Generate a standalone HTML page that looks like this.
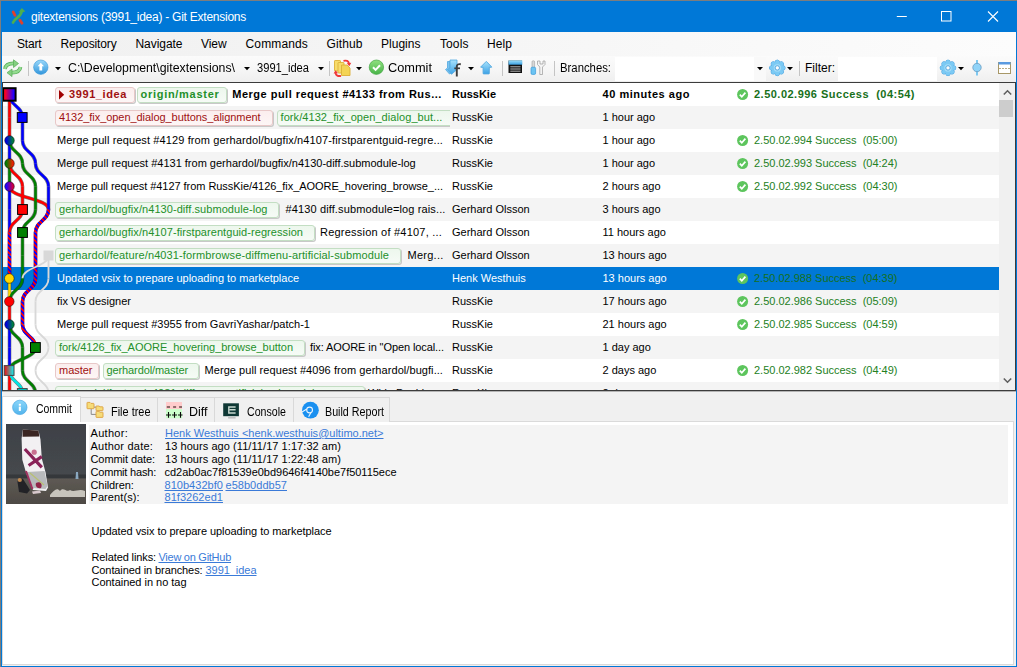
<!DOCTYPE html>
<html><head><meta charset="utf-8"><style>
html,body{margin:0;padding:0;width:1017px;height:667px;overflow:hidden;position:relative;font-family:"Liberation Sans", sans-serif;}
</style></head><body>
<div style="position:absolute;left:0px;top:0px;width:1017px;height:667px;background:#7d7d7d"></div>
<div style="position:absolute;left:1px;top:1px;width:1016px;height:666px;background:#0078d7"></div>
<div style="position:absolute;left:2px;top:32px;width:1014px;height:634px;background:#f0f0f0"></div>
<svg style="position:absolute;left:0;top:0" width="40" height="32">
<path d="M13 22.5 C15 17.5 21 17.5 21.8 11" stroke="#4caf50" stroke-width="2.7" fill="none" stroke-linecap="round"/>
<path d="M19.6 11.8 L21.8 8.6 L24.6 11.2 Z" fill="#4caf50" stroke="#4caf50" stroke-width="1"/>
<path d="M13.2 11.9 L15 15.3" stroke="#e0402a" stroke-width="2.8" stroke-linecap="round"/>
<path d="M20 20.2 L22 23.2" stroke="#e0402a" stroke-width="2.8" stroke-linecap="round"/>
</svg>
<svg style="position:absolute;left:880;top:0;left:880px" width="137" height="32">
<path d="M16.8 16.5 H26.8" stroke="#fff" stroke-width="1"/>
<rect x="61.5" y="11.5" width="9.5" height="9.5" stroke="#fff" stroke-width="1" fill="none"/>
<path d="M108 11.5 L118 21.5 M118 11.5 L108 21.5" stroke="#fff" stroke-width="1.1"/>
</svg>
<div style="position:absolute;left:2px;top:32px;width:1014px;height:24px;background:linear-gradient(to right,#f0f0f0,#f6f6f6 50%,#fcfcfc)"></div>
<div style="position:absolute;left:2px;top:56px;width:1014px;height:26px;background:linear-gradient(#fbfbfb,#f6f6f6 50%,#efefef)"></div>
<div style="position:absolute;left:615px;top:57px;width:140px;height:24px;background:#fff"></div>
<div style="position:absolute;left:754px;top:57px;width:12px;height:24px;background:#f9f9f9"></div>
<div style="position:absolute;left:838px;top:57px;width:99px;height:24px;background:#fff"></div>
<div style="position:absolute;left:28px;top:61px;width:1px;height:15px;background:#c4c4c4"></div>
<div style="position:absolute;left:329px;top:61px;width:1px;height:15px;background:#c4c4c4"></div>
<div style="position:absolute;left:502px;top:61px;width:1px;height:15px;background:#c4c4c4"></div>
<div style="position:absolute;left:554px;top:61px;width:1px;height:15px;background:#c4c4c4"></div>
<div style="position:absolute;left:799px;top:61px;width:1px;height:15px;background:#c4c4c4"></div>
<svg style="position:absolute;left:54.5px;top:66.7px" width="6" height="4"><path d="M0 0H6L3 3.2Z" fill="#000"/></svg>
<svg style="position:absolute;left:243.5px;top:66.7px" width="6" height="4"><path d="M0 0H6L3 3.2Z" fill="#000"/></svg>
<svg style="position:absolute;left:317.5px;top:66.7px" width="6" height="4"><path d="M0 0H6L3 3.2Z" fill="#000"/></svg>
<svg style="position:absolute;left:356px;top:66.7px" width="6" height="4"><path d="M0 0H6L3 3.2Z" fill="#000"/></svg>
<svg style="position:absolute;left:467.5px;top:66.7px" width="6" height="4"><path d="M0 0H6L3 3.2Z" fill="#000"/></svg>
<svg style="position:absolute;left:756.5px;top:66.7px" width="6" height="4"><path d="M0 0H6L3 3.2Z" fill="#000"/></svg>
<svg style="position:absolute;left:787px;top:66.7px" width="6" height="4"><path d="M0 0H6L3 3.2Z" fill="#000"/></svg>
<svg style="position:absolute;left:957.5px;top:66.7px" width="6" height="4"><path d="M0 0H6L3 3.2Z" fill="#000"/></svg>
<svg style="position:absolute;left:0;top:56px" width="1017" height="26">
<defs>
<linearGradient id="gblue" x1="0" y1="0" x2="0" y2="1"><stop offset="0" stop-color="#9ad8fa"/><stop offset="1" stop-color="#3196dc"/></linearGradient>
<linearGradient id="ggreen" x1="0" y1="0" x2="0" y2="1"><stop offset="0" stop-color="#90e080"/><stop offset="1" stop-color="#48b448"/></linearGradient>
<linearGradient id="garr" x1="0" y1="0" x2="0" y2="1"><stop offset="0" stop-color="#a8e2fb"/><stop offset="1" stop-color="#3ca2e6"/></linearGradient>
<radialGradient id="ggear" cx="0.5" cy="0.4" r="0.6"><stop offset="0" stop-color="#b5e4fb"/><stop offset="1" stop-color="#4aaee8"/></radialGradient>
</defs>
<!-- refresh -->
<path d="M5 13 C5.5 9 9.5 7.2 14.5 7.4" stroke="#58ac58" stroke-width="3.6" fill="none"/>
<path d="M5 13 C5.5 9 9.5 7.2 14.5 7.4" stroke="#94dc90" stroke-width="2.2" fill="none"/>
<path d="M13.5 3.8 L18.5 7.5 L13.5 11.5 Z" fill="#84d080" stroke="#58ac58" stroke-width="0.7"/>
<path d="M20.5 11 C20 15 16 16.8 11 16.6" stroke="#58ac58" stroke-width="3.6" fill="none"/>
<path d="M20.5 11 C20 15 16 16.8 11 16.6" stroke="#94dc90" stroke-width="2.2" fill="none"/>
<path d="M12 13 L7 16.7 L12 20.6 Z" fill="#84d080" stroke="#58ac58" stroke-width="0.7"/>
<!-- blue up circle -->
<circle cx="40.8" cy="11.2" r="7.2" fill="url(#gblue)" stroke="#3a98d8" stroke-width="0.6"/>
<path d="M40.8 6.8 L44 10.2 H42.2 V14.5 H39.4 V10.2 H37.6 Z" fill="#fff"/>
<!-- branch docs -->
<rect x="334.5" y="4.5" width="6" height="10.5" rx="0.6" fill="#f7dc6a" stroke="#dcb038" stroke-width="0.9"/>
<rect x="338" y="6.5" width="6" height="10.5" rx="0.6" fill="#f7dc6a" stroke="#dcb038" stroke-width="0.9"/>
<path d="M341.5 9 H347 L350 12 V19.5 H341.5 Z" fill="#f4d455" stroke="#dcb038" stroke-width="0.9"/>
<path d="M343.5 4.8 C346.5 4 348.5 5 349 7.5" stroke="#f03838" stroke-width="1.8" fill="none"/>
<path d="M346.8 7.2 L349.3 10.2 L351.3 6.8 Z" fill="#f03838"/>
<path d="M341 19.8 C338 20.5 336 19.5 335.5 17" stroke="#f03838" stroke-width="1.8" fill="none"/>
<path d="M333.6 17.4 L335.6 14.2 L338 17.2 Z" fill="#f03838"/>
<!-- commit check -->
<circle cx="376.4" cy="11.2" r="7.2" fill="url(#ggreen)" stroke="#48a848" stroke-width="0.7"/>
<path d="M373 11.3 L375.6 13.9 L380 9.2" stroke="#fff" stroke-width="2" fill="none"/>
<!-- pull -->
<path d="M447.5 5.5 H450 V12 L453 15.5 L449.5 18 L445.5 13.5 L447.5 12 Z" fill="#7cc4f0" stroke="#52a8e0" stroke-width="0.8"/>
<path d="M450 4 H457 V13.5 L451.5 18.3 L447.5 13.5 L450 12 Z" fill="url(#garr)" stroke="#52a8e0" stroke-width="0.8"/>
<path d="M456.8 20.5 V10.5 C456.8 8.5 458 7.8 460.8 8.2" stroke="#3c3c3c" stroke-width="1.9" fill="none"/>
<path d="M454.3 12.3 H460" stroke="#3c3c3c" stroke-width="1.7"/>
<!-- push -->
<path d="M486.3 5.4 L491.6 10.8 Q492 11.3 491.4 11.3 H489.3 V17.4 Q489.3 17.9 488.8 17.9 H483.6 Q483.1 17.9 483.1 17.4 V11.3 H481 Q480.4 11.3 480.9 10.8 Z" fill="url(#garr)" stroke="#52a8e0" stroke-width="0.9"/>
<!-- console -->
<rect x="508.5" y="4.5" width="13.5" height="12.5" fill="#111"/>
<defs><linearGradient id="gcon" x1="0" y1="0" x2="0" y2="1"><stop offset="0" stop-color="#9ee0fa"/><stop offset="1" stop-color="#3a9ee0"/></linearGradient></defs><rect x="508.5" y="4.3" width="13.8" height="4.4" fill="url(#gcon)"/>
<path d="M510.3 10.8 H520.5 M510.3 13 H520.5 M510.3 15.2 H520.5" stroke="#c8c8c8" stroke-width="0.9"/>
<!-- settings -->
<rect x="532" y="4.8" width="2.6" height="7.5" rx="1" fill="#d8d8d8" stroke="#a0a0a0" stroke-width="0.6"/>
<rect x="531" y="11.2" width="4.6" height="7.2" rx="1.2" fill="#6cc4f2" stroke="#3a9ada" stroke-width="0.7"/>
<path d="M537.5 5 V8.5 L539.8 11 V18.5 H542.5 V11 L545 8.5 V5 H543 V8 H540 V5 Z" fill="#f4f4f4" stroke="#999" stroke-width="0.7"/>
<!-- gears -->
<g transform="translate(777.3,11.9)"><g fill="#4aa2e0" stroke="#4aa2e0" stroke-width="1"><circle cx="5.60" cy="0.00" r="2.2"/><circle cx="3.96" cy="3.96" r="2.2"/><circle cx="0.00" cy="5.60" r="2.2"/><circle cx="-3.96" cy="3.96" r="2.2"/><circle cx="-5.60" cy="0.00" r="2.2"/><circle cx="-3.96" cy="-3.96" r="2.2"/><circle cx="-0.00" cy="-5.60" r="2.2"/><circle cx="3.96" cy="-3.96" r="2.2"/><circle r="5.6"/></g><g fill="#7ccaf4"><circle cx="5.60" cy="0.00" r="2.2"/><circle cx="3.96" cy="3.96" r="2.2"/><circle cx="0.00" cy="5.60" r="2.2"/><circle cx="-3.96" cy="3.96" r="2.2"/><circle cx="-5.60" cy="0.00" r="2.2"/><circle cx="-3.96" cy="-3.96" r="2.2"/><circle cx="-0.00" cy="-5.60" r="2.2"/><circle cx="3.96" cy="-3.96" r="2.2"/><circle r="5.6"/></g><circle r="3.6" fill="#a8def8"/><circle r="2.2" fill="#fbfbfb" stroke="#48a0dc" stroke-width="0.9"/></g>
<g transform="translate(948,11.9)"><g fill="#4aa2e0" stroke="#4aa2e0" stroke-width="1"><circle cx="5.60" cy="0.00" r="2.2"/><circle cx="3.96" cy="3.96" r="2.2"/><circle cx="0.00" cy="5.60" r="2.2"/><circle cx="-3.96" cy="3.96" r="2.2"/><circle cx="-5.60" cy="0.00" r="2.2"/><circle cx="-3.96" cy="-3.96" r="2.2"/><circle cx="-0.00" cy="-5.60" r="2.2"/><circle cx="3.96" cy="-3.96" r="2.2"/><circle r="5.6"/></g><g fill="#7ccaf4"><circle cx="5.60" cy="0.00" r="2.2"/><circle cx="3.96" cy="3.96" r="2.2"/><circle cx="0.00" cy="5.60" r="2.2"/><circle cx="-3.96" cy="3.96" r="2.2"/><circle cx="-5.60" cy="0.00" r="2.2"/><circle cx="-3.96" cy="-3.96" r="2.2"/><circle cx="-0.00" cy="-5.60" r="2.2"/><circle cx="3.96" cy="-3.96" r="2.2"/><circle r="5.6"/></g><circle r="3.6" fill="#a8def8"/><circle r="2.2" fill="#fbfbfb" stroke="#48a0dc" stroke-width="0.9"/></g>
<!-- commit node -->
<path d="M977 4 V19.5" stroke="#7ec8f0" stroke-width="2"/>
<circle cx="977" cy="11.5" r="4.2" fill="#8fd3f8" stroke="#6a9cc0" stroke-width="0.8"/>
<!-- window icon -->
<rect x="998.5" y="6.5" width="12" height="11" fill="#fff" stroke="#a89868" stroke-width="1"/>
<rect x="998.5" y="6" width="12" height="2.5" fill="#5a9ae0"/>
<path d="M999 12.5 H1010" stroke="#a89868" stroke-width="0.8" stroke-dasharray="2 1"/>
</svg>
<div style="position:absolute;left:2px;top:82px;width:1014px;height:309px;background:#3c3c3c"></div>
<div style="position:absolute;left:3px;top:83px;width:1012px;height:307px;background:#fff"></div>
<div style="position:absolute;left:3px;top:106px;width:996px;height:23px;background:#f4f4f4"></div>
<div style="position:absolute;left:3px;top:152px;width:996px;height:23px;background:#f4f4f4"></div>
<div style="position:absolute;left:3px;top:198px;width:996px;height:23px;background:#f4f4f4"></div>
<div style="position:absolute;left:3px;top:244px;width:996px;height:23px;background:#f4f4f4"></div>
<div style="position:absolute;left:3px;top:267px;width:996px;height:23px;background:#0078d7"></div>
<div style="position:absolute;left:3px;top:290px;width:996px;height:23px;background:#f4f4f4"></div>
<div style="position:absolute;left:3px;top:336px;width:996px;height:23px;background:#f4f4f4"></div>
<div style="position:absolute;left:3px;top:382px;width:996px;height:8px;background:#f4f4f4"></div>
<div style="position:absolute;left:999px;top:83px;width:16px;height:307px;background:#f0f0f0"></div>
<div style="position:absolute;left:999px;top:100px;width:14px;height:17px;background:#cdcdcd"></div>
<svg style="position:absolute;left:998.5px;top:83px" width="17" height="307">
<path d="M4.8 11.5 L8.5 7.8 L12.2 11.5" stroke="#606060" stroke-width="1.6" fill="none"/>
<path d="M4.8 295.5 L8.5 299.2 L12.2 295.5" stroke="#606060" stroke-width="1.6" fill="none"/>
</svg>
<div style="position:absolute;left:0;top:0;width:1017px;height:667px;clip-path:inset(83px 19px 277px 3px)">
<div style="position:absolute;left:55px;top:87.0px;width:80px;height:16px;background:linear-gradient(#fbeeee,#fdf6f6);border:1px solid #e8c8c8;border-radius:3px;box-shadow:1px 1px 0 #c8c8c8;box-sizing:border-box"></div>
<svg style="position:absolute;left:59px;top:90.0px" width="6" height="10"><path d="M0 0 L5.2 4.75 L0 9.5Z" fill="#a00000"/></svg>
<div style="position:absolute;left:136.5px;top:87.0px;width:90px;height:16px;background:linear-gradient(#edf7ed,#f6fbf6);border:1px solid #c3dec3;border-radius:3px;box-shadow:1px 1px 0 #c8c8c8;box-sizing:border-box"></div>
<svg style="position:absolute;left:736px;top:88.1px" width="13" height="13"><circle cx="6.6" cy="6.5" r="5.5" fill="#5dc55d"/><path d="M3.8 6.6 L5.8 8.8 L9.4 4.6" stroke="#fff" stroke-width="1.7" fill="none"/></svg>
<div style="position:absolute;left:55px;top:110.0px;width:218px;height:16px;background:linear-gradient(#fbeeee,#fdf6f6);border:1px solid #e8c8c8;border-radius:3px;box-shadow:1px 1px 0 #c8c8c8;box-sizing:border-box"></div>
<div style="position:absolute;left:276.5px;top:110.0px;width:173.5px;height:18px;overflow:hidden"><div style="position:absolute;left:0;top:0;width:200px;height:16px;background:linear-gradient(#edf7ed,#f6fbf6);border:1px solid #c3dec3;border-radius:3px;box-shadow:1px 1px 0 #c8c8c8;box-sizing:border-box"></div></div>
<svg style="position:absolute;left:736px;top:134.1px" width="13" height="13"><circle cx="6.6" cy="6.5" r="5.5" fill="#5dc55d"/><path d="M3.8 6.6 L5.8 8.8 L9.4 4.6" stroke="#fff" stroke-width="1.7" fill="none"/></svg>
<svg style="position:absolute;left:736px;top:157.1px" width="13" height="13"><circle cx="6.6" cy="6.5" r="5.5" fill="#5dc55d"/><path d="M3.8 6.6 L5.8 8.8 L9.4 4.6" stroke="#fff" stroke-width="1.7" fill="none"/></svg>
<svg style="position:absolute;left:736px;top:180.1px" width="13" height="13"><circle cx="6.6" cy="6.5" r="5.5" fill="#5dc55d"/><path d="M3.8 6.6 L5.8 8.8 L9.4 4.6" stroke="#fff" stroke-width="1.7" fill="none"/></svg>
<div style="position:absolute;left:55px;top:202.0px;width:224px;height:16px;background:linear-gradient(#edf7ed,#f6fbf6);border:1px solid #c3dec3;border-radius:3px;box-shadow:1px 1px 0 #c8c8c8;box-sizing:border-box"></div>
<div style="position:absolute;left:55px;top:225.0px;width:260px;height:16px;background:linear-gradient(#edf7ed,#f6fbf6);border:1px solid #c3dec3;border-radius:3px;box-shadow:1px 1px 0 #c8c8c8;box-sizing:border-box"></div>
<div style="position:absolute;left:55px;top:248.0px;width:346px;height:16px;background:linear-gradient(#edf7ed,#f6fbf6);border:1px solid #c3dec3;border-radius:3px;box-shadow:1px 1px 0 #c8c8c8;box-sizing:border-box"></div>
<svg style="position:absolute;left:736px;top:272.1px" width="13" height="13"><circle cx="6.6" cy="6.5" r="5.5" fill="#5dc55d"/><path d="M3.8 6.6 L5.8 8.8 L9.4 4.6" stroke="#fff" stroke-width="1.7" fill="none"/></svg>
<svg style="position:absolute;left:736px;top:295.1px" width="13" height="13"><circle cx="6.6" cy="6.5" r="5.5" fill="#5dc55d"/><path d="M3.8 6.6 L5.8 8.8 L9.4 4.6" stroke="#fff" stroke-width="1.7" fill="none"/></svg>
<svg style="position:absolute;left:736px;top:318.1px" width="13" height="13"><circle cx="6.6" cy="6.5" r="5.5" fill="#5dc55d"/><path d="M3.8 6.6 L5.8 8.8 L9.4 4.6" stroke="#fff" stroke-width="1.7" fill="none"/></svg>
<div style="position:absolute;left:55px;top:340.0px;width:250px;height:16px;background:linear-gradient(#edf7ed,#f6fbf6);border:1px solid #c3dec3;border-radius:3px;box-shadow:1px 1px 0 #c8c8c8;box-sizing:border-box"></div>
<div style="position:absolute;left:55px;top:363.0px;width:43.5px;height:16px;background:linear-gradient(#fbeeee,#fdf6f6);border:1px solid #e8c8c8;border-radius:3px;box-shadow:1px 1px 0 #c8c8c8;box-sizing:border-box"></div>
<div style="position:absolute;left:102.5px;top:363.0px;width:96px;height:16px;background:linear-gradient(#edf7ed,#f6fbf6);border:1px solid #c3dec3;border-radius:3px;box-shadow:1px 1px 0 #c8c8c8;box-sizing:border-box"></div>
<svg style="position:absolute;left:736px;top:364.1px" width="13" height="13"><circle cx="6.6" cy="6.5" r="5.5" fill="#5dc55d"/><path d="M3.8 6.6 L5.8 8.8 L9.4 4.6" stroke="#fff" stroke-width="1.7" fill="none"/></svg>
<div style="position:absolute;left:55px;top:386.0px;width:310px;height:16px;background:linear-gradient(#edf7ed,#f6fbf6);border:1px solid #c3dec3;border-radius:3px;box-shadow:1px 1px 0 #c8c8c8;box-sizing:border-box"></div>
</div>
<svg style="position:absolute;left:3px;top:83px" width="60" height="307" viewBox="3 83 60 307">
<defs>
<linearGradient id="nrb" x1="0" x2="1"><stop offset="0.15" stop-color="#ff0020"/><stop offset="0.85" stop-color="#2000ff"/></linearGradient>
<linearGradient id="nbg" x1="0" x2="1"><stop offset="0.15" stop-color="#0000e0"/><stop offset="0.85" stop-color="#008040"/></linearGradient>
<linearGradient id="ngr" x1="0" x2="1"><stop offset="0.15" stop-color="#008000"/><stop offset="0.85" stop-color="#f02000"/></linearGradient>
<linearGradient id="nbr" x1="0" x2="1"><stop offset="0.15" stop-color="#2000ff"/><stop offset="0.85" stop-color="#d00040"/></linearGradient>
<linearGradient id="nrc" x1="0" x2="1"><stop offset="0.1" stop-color="#e02020"/><stop offset="0.9" stop-color="#20e0e0"/></linearGradient>
<pattern id="stripe" patternUnits="userSpaceOnUse" width="3.4" height="4" patternTransform="rotate(-45)"><rect width="3.4" height="4" fill="#0000ff"/><rect width="1.7" height="4" fill="#ff0000"/></pattern>
</defs>
<path d="M9.5 94.5 L9.5 117.5" stroke="#000" stroke-opacity="0.5" stroke-width="3.6" fill="none"/>
<path d="M9.5 94.5 C9.5 106.0 22.5 106.0 22.5 117.5" stroke="#000" stroke-opacity="0.5" stroke-width="3.6" fill="none"/>
<path d="M9.5 117.5 L9.5 140.5" stroke="#000" stroke-opacity="0.5" stroke-width="3.6" fill="none"/>
<path d="M22.5 117.5 L22.5 140.5" stroke="#000" stroke-opacity="0.5" stroke-width="3.6" fill="none"/>
<path d="M9.5 140.5 L9.5 163.5" stroke="#000" stroke-opacity="0.5" stroke-width="3.6" fill="none"/>
<path d="M9.5 140.5 C9.5 152.0 22.5 152.0 22.5 163.5" stroke="#000" stroke-opacity="0.5" stroke-width="3.6" fill="none"/>
<path d="M22.5 140.5 C22.5 152.0 35.5 152.0 35.5 163.5" stroke="#000" stroke-opacity="0.5" stroke-width="3.6" fill="none"/>
<path d="M9.5 163.5 L9.5 186.5" stroke="#000" stroke-opacity="0.5" stroke-width="3.6" fill="none"/>
<path d="M9.5 163.5 C9.5 175.0 22.5 175.0 22.5 186.5" stroke="#000" stroke-opacity="0.5" stroke-width="3.6" fill="none"/>
<path d="M22.5 163.5 C22.5 175.0 35.5 175.0 35.5 186.5" stroke="#000" stroke-opacity="0.5" stroke-width="3.6" fill="none"/>
<path d="M35.5 163.5 C35.5 175.0 48.5 175.0 48.5 186.5" stroke="#000" stroke-opacity="0.5" stroke-width="3.6" fill="none"/>
<path d="M9.5 186.5 L9.5 209.5" stroke="#000" stroke-opacity="0.5" stroke-width="3.6" fill="none"/>
<path d="M9.5 186.5 C9.5 198.0 48.5 198.0 48.5 209.5" stroke="#000" stroke-opacity="0.5" stroke-width="3.6" fill="none"/>
<path d="M22.5 186.5 L22.5 209.5" stroke="#000" stroke-opacity="0.5" stroke-width="3.6" fill="none"/>
<path d="M35.5 186.5 L35.5 209.5" stroke="#000" stroke-opacity="0.5" stroke-width="3.6" fill="none"/>
<path d="M48.5 186.5 L48.5 209.5" stroke="#000" stroke-opacity="0.5" stroke-width="3.6" fill="none"/>
<path d="M9.5 209.5 L9.5 232.5" stroke="#000" stroke-opacity="0.5" stroke-width="3.6" fill="none"/>
<path d="M22.5 209.5 C22.5 221.0 9.5 221.0 9.5 232.5" stroke="#000" stroke-opacity="0.5" stroke-width="3.6" fill="none"/>
<path d="M35.5 209.5 C35.5 221.0 22.5 221.0 22.5 232.5" stroke="#000" stroke-opacity="0.5" stroke-width="3.6" fill="none"/>
<path d="M48.5 209.5 C48.5 221.0 35.5 221.0 35.5 232.5" stroke="#000" stroke-opacity="0.5" stroke-width="3.6" fill="none"/>
<path d="M9.5 232.5 L9.5 255.5" stroke="#000" stroke-opacity="0.5" stroke-width="3.6" fill="none"/>
<path d="M22.5 232.5 L22.5 255.5" stroke="#000" stroke-opacity="0.5" stroke-width="3.6" fill="none"/>
<path d="M35.5 232.5 L35.5 255.5" stroke="#000" stroke-opacity="0.5" stroke-width="3.6" fill="none"/>
<path d="M9.5 255.5 L9.5 278.5" stroke="#000" stroke-opacity="0.5" stroke-width="3.6" fill="none"/>
<path d="M22.5 255.5 L22.5 278.5" stroke="#000" stroke-opacity="0.5" stroke-width="3.6" fill="none"/>
<path d="M35.5 255.5 L35.5 278.5" stroke="#000" stroke-opacity="0.5" stroke-width="3.6" fill="none"/>
<path d="M9.5 278.5 L9.5 301.5" stroke="#000" stroke-opacity="0.5" stroke-width="3.6" fill="none"/>
<path d="M22.5 278.5 C22.5 290.0 9.5 290.0 9.5 301.5" stroke="#000" stroke-opacity="0.5" stroke-width="3.6" fill="none"/>
<path d="M35.5 278.5 C35.5 290.0 22.5 290.0 22.5 301.5" stroke="#000" stroke-opacity="0.5" stroke-width="3.6" fill="none"/>
<path d="M9.5 301.5 L9.5 324.5" stroke="#000" stroke-opacity="0.5" stroke-width="3.6" fill="none"/>
<path d="M22.5 301.5 L22.5 324.5" stroke="#000" stroke-opacity="0.5" stroke-width="3.6" fill="none"/>
<path d="M9.5 324.5 L9.5 347.5" stroke="#000" stroke-opacity="0.5" stroke-width="3.6" fill="none"/>
<path d="M9.5 324.5 C9.5 336.0 22.5 336.0 22.5 347.5" stroke="#000" stroke-opacity="0.5" stroke-width="3.6" fill="none"/>
<path d="M22.5 324.5 C22.5 336.0 35.5 336.0 35.5 347.5" stroke="#000" stroke-opacity="0.5" stroke-width="3.6" fill="none"/>
<path d="M9.5 347.5 L9.5 370.5" stroke="#000" stroke-opacity="0.5" stroke-width="3.6" fill="none"/>
<path d="M22.5 347.5 L22.5 370.5" stroke="#000" stroke-opacity="0.5" stroke-width="3.6" fill="none"/>
<path d="M35.5 347.5 C35.5 359.0 9.5 359.0 9.5 370.5" stroke="#000" stroke-opacity="0.5" stroke-width="3.6" fill="none"/>
<path d="M9.5 370.5 L9.5 393.5" stroke="#000" stroke-opacity="0.5" stroke-width="3.6" fill="none"/>
<path d="M9.5 370.5 C9.5 382.0 22.5 382.0 22.5 393.5" stroke="#000" stroke-opacity="0.5" stroke-width="3.6" fill="none"/>
<path d="M22.5 370.5 C22.5 382.0 35.5 382.0 35.5 393.5" stroke="#000" stroke-opacity="0.5" stroke-width="3.6" fill="none"/>
<path d="M9.5 94.5 L9.5 117.5" stroke="#ff0000" stroke-width="2.5" fill="none"/>
<path d="M9.5 94.5 C9.5 106.0 22.5 106.0 22.5 117.5" stroke="#0000ff" stroke-width="2.5" fill="none"/>
<path d="M9.5 117.5 L9.5 140.5" stroke="#ff0000" stroke-width="2.5" fill="none"/>
<path d="M22.5 117.5 L22.5 140.5" stroke="#0000ff" stroke-width="2.5" fill="none"/>
<path d="M9.5 140.5 L9.5 163.5" stroke="#0000ff" stroke-width="2.5" fill="none"/>
<path d="M9.5 140.5 C9.5 152.0 22.5 152.0 22.5 163.5" stroke="#008000" stroke-width="2.5" fill="none"/>
<path d="M22.5 140.5 C22.5 152.0 35.5 152.0 35.5 163.5" stroke="#0000ff" stroke-width="2.5" fill="none"/>
<path d="M9.5 163.5 L9.5 186.5" stroke="#008000" stroke-width="2.5" fill="none"/>
<path d="M9.5 163.5 C9.5 175.0 22.5 175.0 22.5 186.5" stroke="#ff0000" stroke-width="2.5" fill="none"/>
<path d="M22.5 163.5 C22.5 175.0 35.5 175.0 35.5 186.5" stroke="#008000" stroke-width="2.5" fill="none"/>
<path d="M35.5 163.5 C35.5 175.0 48.5 175.0 48.5 186.5" stroke="#0000ff" stroke-width="2.5" fill="none"/>
<path d="M9.5 186.5 L9.5 209.5" stroke="#0000ff" stroke-width="2.5" fill="none"/>
<path d="M9.5 186.5 C9.5 198.0 48.5 198.0 48.5 209.5" stroke="#ff0000" stroke-width="2.5" fill="none"/>
<path d="M22.5 186.5 L22.5 209.5" stroke="#ff0000" stroke-width="2.5" fill="none"/>
<path d="M35.5 186.5 L35.5 209.5" stroke="#008000" stroke-width="2.5" fill="none"/>
<path d="M48.5 186.5 L48.5 209.5" stroke="#0000ff" stroke-width="2.5" fill="none"/>
<path d="M9.5 209.5 L9.5 232.5" stroke="#0000ff" stroke-width="2.5" fill="none"/>
<path d="M22.5 209.5 C22.5 221.0 9.5 221.0 9.5 232.5" stroke="#ff0000" stroke-width="2.5" fill="none"/>
<path d="M35.5 209.5 C35.5 221.0 22.5 221.0 22.5 232.5" stroke="#008000" stroke-width="2.5" fill="none"/>
<path d="M48.5 209.5 C48.5 221.0 35.5 221.0 35.5 232.5" stroke="url(#stripe)" stroke-width="3.5" fill="none"/>
<path d="M9.5 232.5 L9.5 255.5" stroke="url(#stripe)" stroke-width="3.5" fill="none"/>
<path d="M22.5 232.5 L22.5 255.5" stroke="#008000" stroke-width="2.5" fill="none"/>
<path d="M35.5 232.5 L35.5 255.5" stroke="url(#stripe)" stroke-width="3.5" fill="none"/>
<path d="M9.5 255.5 L9.5 278.5" stroke="url(#stripe)" stroke-width="3.5" fill="none"/>
<path d="M22.5 255.5 L22.5 278.5" stroke="#008000" stroke-width="2.5" fill="none"/>
<path d="M35.5 255.5 L35.5 278.5" stroke="url(#stripe)" stroke-width="3.5" fill="none"/>
<path d="M48.5 255.5 C48.5 267.0 22.5 267.0 22.5 278.5" stroke="#d8d8d8" stroke-width="1.9" fill="none"/>
<path d="M48.5 255.5 L48.5 278.5" stroke="#d8d8d8" stroke-width="1.9" fill="none"/>
<path d="M9.5 278.5 L9.5 301.5" stroke="#ffd700" stroke-width="2.5" fill="none"/>
<path d="M22.5 278.5 C22.5 290.0 9.5 290.0 9.5 301.5" stroke="#008000" stroke-width="2.5" fill="none"/>
<path d="M35.5 278.5 C35.5 290.0 22.5 290.0 22.5 301.5" stroke="url(#stripe)" stroke-width="3.5" fill="none"/>
<path d="M48.5 278.5 C48.5 290.0 35.5 290.0 35.5 301.5" stroke="#d8d8d8" stroke-width="1.9" fill="none"/>
<path d="M9.5 301.5 L9.5 324.5" stroke="#ff0000" stroke-width="2.5" fill="none"/>
<path d="M22.5 301.5 L22.5 324.5" stroke="url(#stripe)" stroke-width="3.5" fill="none"/>
<path d="M35.5 301.5 L35.5 324.5" stroke="#d8d8d8" stroke-width="1.9" fill="none"/>
<path d="M9.5 324.5 L9.5 347.5" stroke="#0000ff" stroke-width="2.5" fill="none"/>
<path d="M9.5 324.5 C9.5 336.0 22.5 336.0 22.5 347.5" stroke="#008000" stroke-width="2.5" fill="none"/>
<path d="M22.5 324.5 C22.5 336.0 35.5 336.0 35.5 347.5" stroke="url(#stripe)" stroke-width="3.5" fill="none"/>
<path d="M35.5 324.5 C35.5 336.0 48.5 336.0 48.5 347.5" stroke="#d8d8d8" stroke-width="1.9" fill="none"/>
<path d="M9.5 347.5 L9.5 370.5" stroke="#0000ff" stroke-width="2.5" fill="none"/>
<path d="M22.5 347.5 L22.5 370.5" stroke="#008000" stroke-width="2.5" fill="none"/>
<path d="M35.5 347.5 C35.5 359.0 9.5 359.0 9.5 370.5" stroke="#008000" stroke-width="2.5" fill="none"/>
<path d="M48.5 347.5 C48.5 359.0 35.5 359.0 35.5 370.5" stroke="#d8d8d8" stroke-width="1.9" fill="none"/>
<path d="M9.5 370.5 L9.5 393.5" stroke="#ff0000" stroke-width="2.5" fill="none"/>
<path d="M9.5 370.5 C9.5 382.0 22.5 382.0 22.5 393.5" stroke="#00e5e5" stroke-width="2.5" fill="none"/>
<path d="M22.5 370.5 C22.5 382.0 35.5 382.0 35.5 393.5" stroke="#008000" stroke-width="2.5" fill="none"/>
<path d="M35.5 370.5 C35.5 382.0 48.5 382.0 48.5 393.5" stroke="#d8d8d8" stroke-width="1.9" fill="none"/>
<rect x="3.0999999999999996" y="88.2" width="12.5" height="12.5" fill="url(#nrb)" stroke="#000" stroke-width="2"/>
<rect x="17.299999999999997" y="112.6" width="9.8" height="9.8" fill="#0000ff" stroke="#000" stroke-width="1"/>
<circle cx="9.5" cy="140.5" r="4.8" fill="url(#nbg)" stroke="#000" stroke-opacity="0.6" stroke-width="0.8"/>
<circle cx="9.5" cy="163.5" r="4.8" fill="url(#ngr)" stroke="#000" stroke-opacity="0.6" stroke-width="0.8"/>
<circle cx="9.5" cy="186.5" r="4.8" fill="url(#nbr)" stroke="#000" stroke-opacity="0.6" stroke-width="0.8"/>
<rect x="17.6" y="204.6" width="9.8" height="9.8" fill="#ff0000" stroke="#000" stroke-width="1"/>
<rect x="17.6" y="227.6" width="9.8" height="9.8" fill="#008000" stroke="#000" stroke-width="1"/>
<rect x="43.5" y="250.5" width="10" height="10" fill="#d8d8d8"/>
<circle cx="9.3" cy="278.5" r="4.8" fill="#ffd700" stroke="#000" stroke-opacity="0.6" stroke-width="0.8"/>
<circle cx="9.3" cy="301.5" r="4.8" fill="#ff0000" stroke="#000" stroke-opacity="0.6" stroke-width="0.8"/>
<circle cx="9.5" cy="324.5" r="4.8" fill="url(#nbg)" stroke="#000" stroke-opacity="0.6" stroke-width="0.8"/>
<rect x="30.5" y="342.6" width="9.8" height="9.8" fill="#008000" stroke="#000" stroke-width="1"/>
<rect x="4.199999999999999" y="365.6" width="9.8" height="9.8" fill="url(#nrc)" stroke="#444" stroke-width="1"/>
<rect x="17.4" y="388.6" width="9.8" height="9.8" fill="#00d0d0" stroke="#444" stroke-width="1"/>
</svg>
<div style="position:absolute;left:2px;top:391px;width:1014px;height:6px;background:#f0f0f0"></div>
<div style="position:absolute;left:2px;top:391px;width:1014px;height:1px;background:#b4b4b4"></div>
<div style="position:absolute;left:2px;top:421px;width:1012px;height:244px;background:#fff;border:1px solid #dadada;box-sizing:border-box"></div>
<div style="position:absolute;left:80px;top:397px;width:78px;height:25px;background:#f0f0f0;border:1px solid #d9d9d9;border-bottom:none;box-sizing:border-box"></div>
<div style="position:absolute;left:157px;top:397px;width:58px;height:25px;background:#f0f0f0;border:1px solid #d9d9d9;border-bottom:none;box-sizing:border-box"></div>
<div style="position:absolute;left:214px;top:397px;width:79.5px;height:25px;background:#f0f0f0;border:1px solid #d9d9d9;border-bottom:none;box-sizing:border-box"></div>
<div style="position:absolute;left:292.5px;top:397px;width:97.5px;height:25px;background:#f0f0f0;border:1px solid #d9d9d9;border-bottom:none;box-sizing:border-box"></div>
<div style="position:absolute;left:2px;top:396px;width:79px;height:26px;background:#fff;border:1px solid #d9d9d9;border-bottom:none;box-sizing:border-box"></div>
<svg style="position:absolute;left:0;top:396px" width="400" height="26">
<defs><linearGradient id="ginfo" x1="0" y1="0" x2="0" y2="1"><stop offset="0" stop-color="#8ad6fa"/><stop offset="1" stop-color="#52b4ec"/></linearGradient></defs>
<circle cx="19.8" cy="11.4" r="7.2" fill="url(#ginfo)" stroke="#4aa8e4" stroke-width="0.7"/>
<rect x="18.8" y="10.6" width="2.1" height="4.3" fill="#fff"/><rect x="18.8" y="7.8" width="2.1" height="1.9" fill="#fff"/>
<!-- file tree -->
<path d="M91.2 12.5 V18.4 H96 M94 11.2 H96" stroke="#8a8a8a" stroke-width="1" fill="none"/>
<path d="M87 6.8 Q87 6.4 87.5 6.4 H90 L91 7.4 H93.5 Q94 7.4 94 8 V12.2 Q94 12.7 93.5 12.7 H87.5 Q87 12.7 87 12.2 Z" fill="#f6dc78" stroke="#dca040" stroke-width="0.9"/>
<path d="M96 10.4 Q96 10 96.5 10 H99 L100 10.8 H102.5 Q103 10.8 103 11.3 V14.2 Q103 14.6 102.5 14.6 H96.5 Q96 14.6 96 14.2 Z" fill="#f6dc78" stroke="#dca040" stroke-width="0.9"/>
<path d="M96 15.8 Q96 15.4 96.5 15.4 H99 L100 16.2 H102.5 Q103 16.2 103 16.7 V20.9 Q103 21.4 102.5 21.4 H96.5 Q96 21.4 96 20.9 Z" fill="#f6dc78" stroke="#dca040" stroke-width="0.9"/>
<!-- diff -->
<rect x="166" y="6" width="16" height="7" fill="#ffcccc"/>
<rect x="166" y="13" width="16" height="9.3" fill="#ccffcc"/>
<path d="M166.8 11 H170 M173.1 11 H176.1 M179.1 11 H182" stroke="#6a4a4a" stroke-width="1.3"/>
<path d="M166 19 H171 M168.5 16 V21.7 M172 19 H177 M174.5 16 V21.7 M178 19 H182.5 M180.5 16 V21.7" stroke="#0a0a0a" stroke-width="1.1"/>
<!-- console -->
<rect x="223.2" y="7.3" width="15.7" height="12.9" fill="#0f3835"/>
<path d="M235.6 11 H228.8 V17 H235.6 M229.6 13.7 H235.6" stroke="#c8d8d0" stroke-width="1.4" fill="none"/>
<path d="M228.1 21.8 H235.6" stroke="#bbb" stroke-width="1.4"/>
<!-- build report -->
<circle cx="310.4" cy="14.2" r="8.4" fill="#1a90f0"/>
<circle cx="309.6" cy="14" r="2.9" stroke="#e8f4ff" stroke-width="1.1" fill="none"/>
<path d="M306.8 13 L302 16 M311 16.5 L308.6 20.8" stroke="#e8f4ff" stroke-width="1.1"/>
</svg>
<div style="position:absolute;left:89px;top:425px;width:919px;height:79px;background:#f4f4f4"></div>
<svg style="position:absolute;left:6px;top:424px" width="80" height="80" viewBox="0 0 80 80">
<defs><linearGradient id="sky" x1="0" y1="0" x2="0" y2="1"><stop offset="0" stop-color="#3e4146"/><stop offset="1" stop-color="#4a4d52"/></linearGradient>
<linearGradient id="wat" x1="0" y1="0" x2="0" y2="1"><stop offset="0" stop-color="#5e5a54"/><stop offset="1" stop-color="#4c4843"/></linearGradient>
<filter id="blr" x="-5%" y="-5%" width="110%" height="110%"><feGaussianBlur stdDeviation="0.5"/></filter>
<clipPath id="avc"><rect width="80" height="80"/></clipPath></defs>
<g clip-path="url(#avc)"><g filter="url(#blr)">
<rect x="-2" y="-2" width="84" height="84" fill="url(#sky)"/>
<rect x="-2" y="50.5" width="84" height="4" fill="#34373a"/>
<rect x="-2" y="54.5" width="84" height="28" fill="url(#wat)"/>
<path d="M70 48 L72 48 L72.5 55 L69.5 55 Z" fill="#8aa8c0"/>
<path d="M16.9 5.6 L32.6 6.8 L34.5 15.6 L35.8 34.5 L39.6 48.4 L42 63.5 L40 67 L27 66 L20 48.4 L16.3 35.8 L15.6 14.4 Z" fill="#f2f0f2"/>
<path d="M21 48 L38.5 47 L41.5 62 L39.5 65 L27 64 Z" fill="#b8babc"/>
<path d="M16.9 5.6 L32.6 6.8 L33.2 12.5 L16.5 12.8 Z" fill="#3a2520"/>
<path d="M18.8 25 L35.8 43.3 M35.8 32.6 L22.6 41.5" stroke="#8a2058" stroke-width="3.2" fill="none"/>
<path d="M20 47 L26.5 65" stroke="#a03060" stroke-width="2" fill="none"/>
<circle cx="28.2" cy="28.2" r="2.6" fill="#c87090"/>
<path d="M24 49 L38 61" stroke="#b8c070" stroke-width="1.1" fill="none"/>
<path d="M30 59 C34 57 37 60 35 64 C31 65 29 62 30 59 Z" fill="#902848"/>
<path d="M11.5 58 C11.5 54 16.5 53 18 56.5 L24 66 L21 69.5 L13 68 Z" fill="#222428"/>
<circle cx="13.8" cy="56" r="2.1" fill="#c08a50"/>
<path d="M26 67.5 L34 66.5 L35 69 L27 70 Z" fill="#d8c8cc"/>
<path d="M44 71 C48 66 51 63 54 67 C57 62 61 69 64 66 C68 69 73 64 79 67 L79 73 L44 73 Z" fill="#dcd8d0" opacity="0.85"/>
</g></g>
</svg>
<div id="title" style="position:absolute;left:31px;top:7.09px;line-height:20px;font-size:12px;font-weight:400;color:#fff;white-space:pre;letter-spacing:-0.249px;">gitextensions (3991_idea) - Git Extensions</div>
<div id="menu0" style="position:absolute;left:17px;top:33.84px;line-height:20px;font-size:12px;font-weight:400;color:#000;white-space:pre;letter-spacing:-0.169px;">Start</div>
<div id="menu1" style="position:absolute;left:60.5px;top:33.84px;line-height:20px;font-size:12px;font-weight:400;color:#000;white-space:pre;letter-spacing:-0.136px;">Repository</div>
<div id="menu2" style="position:absolute;left:135.5px;top:33.84px;line-height:20px;font-size:12px;font-weight:400;color:#000;white-space:pre;letter-spacing:-0.047px;">Navigate</div>
<div id="menu3" style="position:absolute;left:201px;top:33.84px;line-height:20px;font-size:12px;font-weight:400;color:#000;white-space:pre;letter-spacing:-0.074px;">View</div>
<div id="menu4" style="position:absolute;left:245.5px;top:33.84px;line-height:20px;font-size:12px;font-weight:400;color:#000;white-space:pre;letter-spacing:0.143px;">Commands</div>
<div id="menu5" style="position:absolute;left:326.5px;top:33.84px;line-height:20px;font-size:12px;font-weight:400;color:#000;white-space:pre;letter-spacing:0.107px;">Github</div>
<div id="menu6" style="position:absolute;left:381px;top:33.84px;line-height:20px;font-size:12px;font-weight:400;color:#000;white-space:pre;letter-spacing:0.020px;">Plugins</div>
<div id="menu7" style="position:absolute;left:440px;top:33.84px;line-height:20px;font-size:12px;font-weight:400;color:#000;white-space:pre;letter-spacing:0.097px;">Tools</div>
<div id="menu8" style="position:absolute;left:487px;top:33.84px;line-height:20px;font-size:12px;font-weight:400;color:#000;white-space:pre;letter-spacing:0.078px;">Help</div>
<div id="tb_path" style="position:absolute;left:68px;top:57.84px;line-height:20px;font-size:12px;font-weight:400;color:#000;white-space:pre;letter-spacing:0.000px;transform:scaleX(1.0261);transform-origin:0 0;">C:\Development\gitextensions\</div>
<div id="tb_branch" style="position:absolute;left:257px;top:57.84px;line-height:20px;font-size:12px;font-weight:400;color:#000;white-space:pre;letter-spacing:0.000px;transform:scaleX(0.9275);transform-origin:0 0;">3991_idea</div>
<div id="tb_commit" style="position:absolute;left:387.5px;top:57.84px;line-height:20px;font-size:12px;font-weight:400;color:#000;white-space:pre;letter-spacing:0.000px;transform:scaleX(1.0642);transform-origin:0 0;">Commit</div>
<div id="tb_branches" style="position:absolute;left:560px;top:57.84px;line-height:20px;font-size:12px;font-weight:400;color:#000;white-space:pre;letter-spacing:0.000px;transform:scaleX(0.9439);transform-origin:0 0;">Branches:</div>
<div id="tb_filter" style="position:absolute;left:805px;top:57.84px;line-height:20px;font-size:12px;font-weight:400;color:#000;white-space:pre;letter-spacing:0.000px;transform:scaleX(1.0000);transform-origin:0 0;">Filter:</div>
<div style="position:absolute;left:0;top:0;width:1017px;height:667px;clip-path:inset(83px 567px 277px 3px)"><div id="tt0_0" style="position:absolute;left:69px;top:84.49px;line-height:20px;font-size:11px;font-weight:700;color:#a01010;white-space:pre;letter-spacing:0.599px;">3991_idea</div></div>
<div style="position:absolute;left:0;top:0;width:1017px;height:667px;clip-path:inset(83px 567px 277px 3px)"><div id="tt0_1" style="position:absolute;left:140.5px;top:84.49px;line-height:20px;font-size:11px;font-weight:700;color:#23902a;white-space:pre;letter-spacing:0.716px;">origin/master</div></div>
<div style="position:absolute;left:0;top:0;width:1017px;height:667px;clip-path:inset(83px 567px 277px 3px)"><div id="msg0" style="position:absolute;left:232.3px;top:84.49px;line-height:20px;font-size:11px;font-weight:700;color:#000;white-space:pre;letter-spacing:0.487px;">Merge pull request #4133 from Rus...</div></div>
<div style="position:absolute;left:0;top:0;width:1017px;height:667px;clip-path:inset(83px 417px 277px 3px)"><div id="au0" style="position:absolute;left:452px;top:84.49px;line-height:20px;font-size:11px;font-weight:700;color:#000;white-space:pre;letter-spacing:0.000px;">RussKie</div></div>
<div style="position:absolute;left:0;top:0;width:1017px;height:667px;clip-path:inset(83px 282px 277px 3px)"><div id="dt0" style="position:absolute;left:602.5px;top:84.49px;line-height:20px;font-size:11px;font-weight:700;color:#000;white-space:pre;letter-spacing:0.530px;">40 minutes ago</div></div>
<div style="position:absolute;left:0;top:0;width:1017px;height:667px;clip-path:inset(83px 19px 277px 3px)"><div id="bd0" style="position:absolute;left:754px;top:84.49px;line-height:20px;font-size:11px;font-weight:700;color:#17701a;white-space:pre;letter-spacing:0.486px;">2.50.02.996 Success  (04:54)</div></div>
<div style="position:absolute;left:0;top:0;width:1017px;height:667px;clip-path:inset(83px 567px 277px 3px)"><div id="tt1_0" style="position:absolute;left:59px;top:107.49px;line-height:20px;font-size:11px;font-weight:400;color:#a01010;white-space:pre;letter-spacing:-0.057px;">4132_fix_open_dialog_buttons_alignment</div></div>
<div style="position:absolute;left:0;top:0;width:1017px;height:667px;clip-path:inset(83px 567px 277px 3px)"><div id="tt1_1" style="position:absolute;left:280.5px;top:107.49px;line-height:20px;font-size:11px;font-weight:400;color:#23902a;white-space:pre;letter-spacing:0.074px;">fork/4132_fix_open_dialog_but...</div></div>
<div style="position:absolute;left:0;top:0;width:1017px;height:667px;clip-path:inset(83px 417px 277px 3px)"><div id="au1" style="position:absolute;left:452px;top:107.49px;line-height:20px;font-size:11px;font-weight:400;color:#000;white-space:pre;letter-spacing:0.000px;">RussKie</div></div>
<div style="position:absolute;left:0;top:0;width:1017px;height:667px;clip-path:inset(83px 282px 277px 3px)"><div id="dt1" style="position:absolute;left:602.5px;top:107.49px;line-height:20px;font-size:11px;font-weight:400;color:#000;white-space:pre;letter-spacing:0.000px;">1 hour ago</div></div>
<div style="position:absolute;left:0;top:0;width:1017px;height:667px;clip-path:inset(83px 567px 277px 3px)"><div id="msg2" style="position:absolute;left:57px;top:130.49px;line-height:20px;font-size:11px;font-weight:400;color:#000;white-space:pre;letter-spacing:0.113px;">Merge pull request #4129 from gerhardol/bugfix/n4107-firstparentguid-regre...</div></div>
<div style="position:absolute;left:0;top:0;width:1017px;height:667px;clip-path:inset(83px 417px 277px 3px)"><div id="au2" style="position:absolute;left:452px;top:130.49px;line-height:20px;font-size:11px;font-weight:400;color:#000;white-space:pre;letter-spacing:0.000px;">RussKie</div></div>
<div style="position:absolute;left:0;top:0;width:1017px;height:667px;clip-path:inset(83px 282px 277px 3px)"><div id="dt2" style="position:absolute;left:602.5px;top:130.49px;line-height:20px;font-size:11px;font-weight:400;color:#000;white-space:pre;letter-spacing:0.000px;">1 hour ago</div></div>
<div style="position:absolute;left:0;top:0;width:1017px;height:667px;clip-path:inset(83px 19px 277px 3px)"><div id="bd2" style="position:absolute;left:754px;top:130.49px;line-height:20px;font-size:11px;font-weight:400;color:#237f23;white-space:pre;letter-spacing:-0.008px;">2.50.02.994 Success  (05:00)</div></div>
<div style="position:absolute;left:0;top:0;width:1017px;height:667px;clip-path:inset(83px 567px 277px 3px)"><div id="msg3" style="position:absolute;left:57px;top:153.49px;line-height:20px;font-size:11px;font-weight:400;color:#000;white-space:pre;letter-spacing:0.000px;">Merge pull request #4131 from gerhardol/bugfix/n4130-diff.submodule-log</div></div>
<div style="position:absolute;left:0;top:0;width:1017px;height:667px;clip-path:inset(83px 417px 277px 3px)"><div id="au3" style="position:absolute;left:452px;top:153.49px;line-height:20px;font-size:11px;font-weight:400;color:#000;white-space:pre;letter-spacing:0.000px;">RussKie</div></div>
<div style="position:absolute;left:0;top:0;width:1017px;height:667px;clip-path:inset(83px 282px 277px 3px)"><div id="dt3" style="position:absolute;left:602.5px;top:153.49px;line-height:20px;font-size:11px;font-weight:400;color:#000;white-space:pre;letter-spacing:0.000px;">1 hour ago</div></div>
<div style="position:absolute;left:0;top:0;width:1017px;height:667px;clip-path:inset(83px 19px 277px 3px)"><div id="bd3" style="position:absolute;left:754px;top:153.49px;line-height:20px;font-size:11px;font-weight:400;color:#237f23;white-space:pre;letter-spacing:-0.008px;">2.50.02.993 Success  (04:24)</div></div>
<div style="position:absolute;left:0;top:0;width:1017px;height:667px;clip-path:inset(83px 567px 277px 3px)"><div id="msg4" style="position:absolute;left:57px;top:176.49px;line-height:20px;font-size:11px;font-weight:400;color:#000;white-space:pre;letter-spacing:-0.049px;">Merge pull request #4127 from RussKie/4126_fix_AOORE_hovering_browse_...</div></div>
<div style="position:absolute;left:0;top:0;width:1017px;height:667px;clip-path:inset(83px 417px 277px 3px)"><div id="au4" style="position:absolute;left:452px;top:176.49px;line-height:20px;font-size:11px;font-weight:400;color:#000;white-space:pre;letter-spacing:0.000px;">RussKie</div></div>
<div style="position:absolute;left:0;top:0;width:1017px;height:667px;clip-path:inset(83px 282px 277px 3px)"><div id="dt4" style="position:absolute;left:602.5px;top:176.49px;line-height:20px;font-size:11px;font-weight:400;color:#000;white-space:pre;letter-spacing:0.000px;">2 hours ago</div></div>
<div style="position:absolute;left:0;top:0;width:1017px;height:667px;clip-path:inset(83px 19px 277px 3px)"><div id="bd4" style="position:absolute;left:754px;top:176.49px;line-height:20px;font-size:11px;font-weight:400;color:#237f23;white-space:pre;letter-spacing:-0.008px;">2.50.02.992 Success  (04:30)</div></div>
<div style="position:absolute;left:0;top:0;width:1017px;height:667px;clip-path:inset(83px 567px 277px 3px)"><div id="tt5_0" style="position:absolute;left:59px;top:199.49px;line-height:20px;font-size:11px;font-weight:400;color:#23902a;white-space:pre;letter-spacing:0.064px;">gerhardol/bugfix/n4130-diff.submodule-log</div></div>
<div style="position:absolute;left:0;top:0;width:1017px;height:667px;clip-path:inset(83px 567px 277px 3px)"><div id="msg5" style="position:absolute;left:285.5px;top:199.49px;line-height:20px;font-size:11px;font-weight:400;color:#000;white-space:pre;letter-spacing:0.124px;">#4130 diff.submodule=log rais...</div></div>
<div style="position:absolute;left:0;top:0;width:1017px;height:667px;clip-path:inset(83px 417px 277px 3px)"><div id="au5" style="position:absolute;left:452px;top:199.49px;line-height:20px;font-size:11px;font-weight:400;color:#000;white-space:pre;letter-spacing:0.000px;">Gerhard Olsson</div></div>
<div style="position:absolute;left:0;top:0;width:1017px;height:667px;clip-path:inset(83px 282px 277px 3px)"><div id="dt5" style="position:absolute;left:602.5px;top:199.49px;line-height:20px;font-size:11px;font-weight:400;color:#000;white-space:pre;letter-spacing:0.000px;">3 hours ago</div></div>
<div style="position:absolute;left:0;top:0;width:1017px;height:667px;clip-path:inset(83px 567px 277px 3px)"><div id="tt6_0" style="position:absolute;left:59px;top:222.49px;line-height:20px;font-size:11px;font-weight:400;color:#23902a;white-space:pre;letter-spacing:0.063px;">gerhardol/bugfix/n4107-firstparentguid-regression</div></div>
<div style="position:absolute;left:0;top:0;width:1017px;height:667px;clip-path:inset(83px 567px 277px 3px)"><div id="msg6" style="position:absolute;left:320px;top:222.49px;line-height:20px;font-size:11px;font-weight:400;color:#000;white-space:pre;letter-spacing:0.217px;">Regression of #4107, ...</div></div>
<div style="position:absolute;left:0;top:0;width:1017px;height:667px;clip-path:inset(83px 417px 277px 3px)"><div id="au6" style="position:absolute;left:452px;top:222.49px;line-height:20px;font-size:11px;font-weight:400;color:#000;white-space:pre;letter-spacing:0.000px;">Gerhard Olsson</div></div>
<div style="position:absolute;left:0;top:0;width:1017px;height:667px;clip-path:inset(83px 282px 277px 3px)"><div id="dt6" style="position:absolute;left:602.5px;top:222.49px;line-height:20px;font-size:11px;font-weight:400;color:#000;white-space:pre;letter-spacing:0.000px;">11 hours ago</div></div>
<div style="position:absolute;left:0;top:0;width:1017px;height:667px;clip-path:inset(83px 567px 277px 3px)"><div id="tt7_0" style="position:absolute;left:59px;top:245.49px;line-height:20px;font-size:11px;font-weight:400;color:#23902a;white-space:pre;letter-spacing:0.115px;">gerhardol/feature/n4031-formbrowse-diffmenu-artificial-submodule</div></div>
<div style="position:absolute;left:0;top:0;width:1017px;height:667px;clip-path:inset(83px 567px 277px 3px)"><div id="msg7" style="position:absolute;left:407.5px;top:245.49px;line-height:20px;font-size:11px;font-weight:400;color:#000;white-space:pre;letter-spacing:0.252px;">Merg...</div></div>
<div style="position:absolute;left:0;top:0;width:1017px;height:667px;clip-path:inset(83px 417px 277px 3px)"><div id="au7" style="position:absolute;left:452px;top:245.49px;line-height:20px;font-size:11px;font-weight:400;color:#000;white-space:pre;letter-spacing:0.000px;">Gerhard Olsson</div></div>
<div style="position:absolute;left:0;top:0;width:1017px;height:667px;clip-path:inset(83px 282px 277px 3px)"><div id="dt7" style="position:absolute;left:602.5px;top:245.49px;line-height:20px;font-size:11px;font-weight:400;color:#000;white-space:pre;letter-spacing:0.000px;">13 hours ago</div></div>
<div style="position:absolute;left:0;top:0;width:1017px;height:667px;clip-path:inset(83px 567px 277px 3px)"><div id="msg8" style="position:absolute;left:57px;top:268.49px;line-height:20px;font-size:11px;font-weight:400;color:#fff;white-space:pre;letter-spacing:-0.016px;">Updated vsix to prepare uploading to marketplace</div></div>
<div style="position:absolute;left:0;top:0;width:1017px;height:667px;clip-path:inset(83px 417px 277px 3px)"><div id="au8" style="position:absolute;left:452px;top:268.49px;line-height:20px;font-size:11px;font-weight:400;color:#fff;white-space:pre;letter-spacing:0.000px;">Henk Westhuis</div></div>
<div style="position:absolute;left:0;top:0;width:1017px;height:667px;clip-path:inset(83px 282px 277px 3px)"><div id="dt8" style="position:absolute;left:602.5px;top:268.49px;line-height:20px;font-size:11px;font-weight:400;color:#fff;white-space:pre;letter-spacing:0.000px;">13 hours ago</div></div>
<div style="position:absolute;left:0;top:0;width:1017px;height:667px;clip-path:inset(83px 19px 277px 3px)"><div id="bd8" style="position:absolute;left:754px;top:268.49px;line-height:20px;font-size:11px;font-weight:400;color:#17701a;white-space:pre;letter-spacing:-0.008px;">2.50.02.988 Success  (04:39)</div></div>
<div style="position:absolute;left:0;top:0;width:1017px;height:667px;clip-path:inset(83px 567px 277px 3px)"><div id="msg9" style="position:absolute;left:57px;top:291.49px;line-height:20px;font-size:11px;font-weight:400;color:#000;white-space:pre;letter-spacing:0.000px;">fix VS designer</div></div>
<div style="position:absolute;left:0;top:0;width:1017px;height:667px;clip-path:inset(83px 417px 277px 3px)"><div id="au9" style="position:absolute;left:452px;top:291.49px;line-height:20px;font-size:11px;font-weight:400;color:#000;white-space:pre;letter-spacing:0.000px;">RussKie</div></div>
<div style="position:absolute;left:0;top:0;width:1017px;height:667px;clip-path:inset(83px 282px 277px 3px)"><div id="dt9" style="position:absolute;left:602.5px;top:291.49px;line-height:20px;font-size:11px;font-weight:400;color:#000;white-space:pre;letter-spacing:0.000px;">17 hours ago</div></div>
<div style="position:absolute;left:0;top:0;width:1017px;height:667px;clip-path:inset(83px 19px 277px 3px)"><div id="bd9" style="position:absolute;left:754px;top:291.49px;line-height:20px;font-size:11px;font-weight:400;color:#237f23;white-space:pre;letter-spacing:-0.008px;">2.50.02.986 Success  (05:09)</div></div>
<div style="position:absolute;left:0;top:0;width:1017px;height:667px;clip-path:inset(83px 567px 277px 3px)"><div id="msg10" style="position:absolute;left:57px;top:314.49px;line-height:20px;font-size:11px;font-weight:400;color:#000;white-space:pre;letter-spacing:0.000px;">Merge pull request #3955 from GavriYashar/patch-1</div></div>
<div style="position:absolute;left:0;top:0;width:1017px;height:667px;clip-path:inset(83px 417px 277px 3px)"><div id="au10" style="position:absolute;left:452px;top:314.49px;line-height:20px;font-size:11px;font-weight:400;color:#000;white-space:pre;letter-spacing:0.000px;">RussKie</div></div>
<div style="position:absolute;left:0;top:0;width:1017px;height:667px;clip-path:inset(83px 282px 277px 3px)"><div id="dt10" style="position:absolute;left:602.5px;top:314.49px;line-height:20px;font-size:11px;font-weight:400;color:#000;white-space:pre;letter-spacing:0.000px;">21 hours ago</div></div>
<div style="position:absolute;left:0;top:0;width:1017px;height:667px;clip-path:inset(83px 19px 277px 3px)"><div id="bd10" style="position:absolute;left:754px;top:314.49px;line-height:20px;font-size:11px;font-weight:400;color:#237f23;white-space:pre;letter-spacing:-0.008px;">2.50.02.985 Success  (04:59)</div></div>
<div style="position:absolute;left:0;top:0;width:1017px;height:667px;clip-path:inset(83px 567px 277px 3px)"><div id="tt11_0" style="position:absolute;left:59px;top:337.49px;line-height:20px;font-size:11px;font-weight:400;color:#23902a;white-space:pre;letter-spacing:-0.034px;">fork/4126_fix_AOORE_hovering_browse_button</div></div>
<div style="position:absolute;left:0;top:0;width:1017px;height:667px;clip-path:inset(83px 567px 277px 3px)"><div id="msg11" style="position:absolute;left:310px;top:337.49px;line-height:20px;font-size:11px;font-weight:400;color:#000;white-space:pre;letter-spacing:-0.092px;">fix: AOORE in &quot;Open local...</div></div>
<div style="position:absolute;left:0;top:0;width:1017px;height:667px;clip-path:inset(83px 417px 277px 3px)"><div id="au11" style="position:absolute;left:452px;top:337.49px;line-height:20px;font-size:11px;font-weight:400;color:#000;white-space:pre;letter-spacing:0.000px;">RussKie</div></div>
<div style="position:absolute;left:0;top:0;width:1017px;height:667px;clip-path:inset(83px 282px 277px 3px)"><div id="dt11" style="position:absolute;left:602.5px;top:337.49px;line-height:20px;font-size:11px;font-weight:400;color:#000;white-space:pre;letter-spacing:0.000px;">1 day ago</div></div>
<div style="position:absolute;left:0;top:0;width:1017px;height:667px;clip-path:inset(83px 567px 277px 3px)"><div id="tt12_0" style="position:absolute;left:59px;top:360.49px;line-height:20px;font-size:11px;font-weight:400;color:#a01010;white-space:pre;letter-spacing:-0.021px;">master</div></div>
<div style="position:absolute;left:0;top:0;width:1017px;height:667px;clip-path:inset(83px 567px 277px 3px)"><div id="tt12_1" style="position:absolute;left:106.5px;top:360.49px;line-height:20px;font-size:11px;font-weight:400;color:#23902a;white-space:pre;letter-spacing:-0.104px;">gerhardol/master</div></div>
<div style="position:absolute;left:0;top:0;width:1017px;height:667px;clip-path:inset(83px 567px 277px 3px)"><div id="msg12" style="position:absolute;left:204.5px;top:360.49px;line-height:20px;font-size:11px;font-weight:400;color:#000;white-space:pre;letter-spacing:0.064px;">Merge pull request #4096 from gerhardol/bugfi...</div></div>
<div style="position:absolute;left:0;top:0;width:1017px;height:667px;clip-path:inset(83px 417px 277px 3px)"><div id="au12" style="position:absolute;left:452px;top:360.49px;line-height:20px;font-size:11px;font-weight:400;color:#000;white-space:pre;letter-spacing:0.000px;">RussKie</div></div>
<div style="position:absolute;left:0;top:0;width:1017px;height:667px;clip-path:inset(83px 282px 277px 3px)"><div id="dt12" style="position:absolute;left:602.5px;top:360.49px;line-height:20px;font-size:11px;font-weight:400;color:#000;white-space:pre;letter-spacing:0.000px;">2 days ago</div></div>
<div style="position:absolute;left:0;top:0;width:1017px;height:667px;clip-path:inset(83px 19px 277px 3px)"><div id="bd12" style="position:absolute;left:754px;top:360.49px;line-height:20px;font-size:11px;font-weight:400;color:#237f23;white-space:pre;letter-spacing:-0.008px;">2.50.02.982 Success  (04:49)</div></div>
<div style="position:absolute;left:0;top:0;width:1017px;height:667px;clip-path:inset(83px 567px 277px 3px)"><div id="tt13_0" style="position:absolute;left:59px;top:383.49px;line-height:20px;font-size:11px;font-weight:400;color:#23902a;white-space:pre;letter-spacing:0.000px;">gerhardol/feature/n4031-diffmenu-artificial-submodule</div></div>
<div style="position:absolute;left:0;top:0;width:1017px;height:667px;clip-path:inset(83px 567px 277px 3px)"><div id="msg13" style="position:absolute;left:368px;top:383.49px;line-height:20px;font-size:11px;font-weight:400;color:#000;white-space:pre;letter-spacing:0.000px;">Wide David...</div></div>
<div style="position:absolute;left:0;top:0;width:1017px;height:667px;clip-path:inset(83px 417px 277px 3px)"><div id="au13" style="position:absolute;left:452px;top:383.49px;line-height:20px;font-size:11px;font-weight:400;color:#000;white-space:pre;letter-spacing:0.000px;">RussKie</div></div>
<div style="position:absolute;left:0;top:0;width:1017px;height:667px;clip-path:inset(83px 282px 277px 3px)"><div id="dt13" style="position:absolute;left:602.5px;top:383.49px;line-height:20px;font-size:11px;font-weight:400;color:#000;white-space:pre;letter-spacing:0.000px;">2 days ago</div></div>
<div id="tab0" style="position:absolute;left:35.5px;top:399.34px;line-height:20px;font-size:12px;font-weight:400;color:#000;white-space:pre;letter-spacing:0.000px;transform:scaleX(0.8707);transform-origin:0 0;">Commit</div>
<div id="tab1" style="position:absolute;left:110.5px;top:401.54px;line-height:20px;font-size:12px;font-weight:400;color:#000;white-space:pre;letter-spacing:0.000px;transform:scaleX(0.9110);transform-origin:0 0;">File tree</div>
<div id="tab2" style="position:absolute;left:189px;top:401.54px;line-height:20px;font-size:12px;font-weight:400;color:#000;white-space:pre;letter-spacing:0.000px;transform:scaleX(1.0395);transform-origin:0 0;">Diff</div>
<div id="tab3" style="position:absolute;left:246.5px;top:401.54px;line-height:20px;font-size:12px;font-weight:400;color:#000;white-space:pre;letter-spacing:0.000px;transform:scaleX(0.8857);transform-origin:0 0;">Console</div>
<div id="tab4" style="position:absolute;left:325px;top:401.54px;line-height:20px;font-size:12px;font-weight:400;color:#000;white-space:pre;letter-spacing:0.000px;transform:scaleX(0.8933);transform-origin:0 0;">Build Report</div>
<div id="lab0" style="position:absolute;left:90.5px;top:422.99px;line-height:20px;font-size:11px;font-weight:400;color:#000;white-space:pre;letter-spacing:0.290px;">Author:</div>
<div id="lab1" style="position:absolute;left:90.5px;top:435.89px;line-height:20px;font-size:11px;font-weight:400;color:#000;white-space:pre;letter-spacing:0.214px;">Author date:</div>
<div id="lab2" style="position:absolute;left:90.5px;top:448.79px;line-height:20px;font-size:11px;font-weight:400;color:#000;white-space:pre;letter-spacing:-0.077px;">Commit date:</div>
<div id="lab3" style="position:absolute;left:90.5px;top:461.69px;line-height:20px;font-size:11px;font-weight:400;color:#000;white-space:pre;letter-spacing:-0.197px;">Commit hash:</div>
<div id="lab4" style="position:absolute;left:90.5px;top:474.59px;line-height:20px;font-size:11px;font-weight:400;color:#000;white-space:pre;letter-spacing:-0.092px;">Children:</div>
<div id="lab5" style="position:absolute;left:90.5px;top:487.49px;line-height:20px;font-size:11px;font-weight:400;color:#000;white-space:pre;letter-spacing:0.080px;">Parent(s):</div>
<div id="v0" style="position:absolute;left:165px;top:422.99px;line-height:20px;font-size:11px;font-weight:400;color:#3a7ad8;white-space:pre;letter-spacing:0.006px;text-decoration:underline">Henk Westhuis &lt;henk.westhuis@ultimo.net&gt;</div>
<div id="v1" style="position:absolute;left:165px;top:435.89px;line-height:20px;font-size:11px;font-weight:400;color:#000;white-space:pre;letter-spacing:0.062px;">13 hours ago (11/11/17 1:17:32 am)</div>
<div id="v2" style="position:absolute;left:165px;top:448.79px;line-height:20px;font-size:11px;font-weight:400;color:#000;white-space:pre;letter-spacing:0.062px;">13 hours ago (11/11/17 1:22:48 am)</div>
<div id="v3" style="position:absolute;left:164.5px;top:461.69px;line-height:20px;font-size:11px;font-weight:400;color:#000;white-space:pre;letter-spacing:-0.021px;">cd2ab0ac7f81539e0bd9646f4140be7f50115ece</div>
<div id="v4" style="position:absolute;left:164.5px;top:474.59px;line-height:20px;font-size:11px;font-weight:400;color:#3a7ad8;white-space:pre;letter-spacing:0.037px;text-decoration:underline">810b432bf0</div>
<div id="v4b" style="position:absolute;left:225.5px;top:474.59px;line-height:20px;font-size:11px;font-weight:400;color:#3a7ad8;white-space:pre;letter-spacing:0.031px;text-decoration:underline">e58b0ddb57</div>
<div id="v5" style="position:absolute;left:164.5px;top:487.49px;line-height:20px;font-size:11px;font-weight:400;color:#3a7ad8;white-space:pre;letter-spacing:0.037px;text-decoration:underline">81f3262ed1</div>
<div id="m0" style="position:absolute;left:91.5px;top:520.89px;line-height:20px;font-size:11px;font-weight:400;color:#000;white-space:pre;letter-spacing:-0.058px;">Updated vsix to prepare uploading to marketplace</div>
<div id="m1" style="position:absolute;left:91.5px;top:546.89px;line-height:20px;font-size:11px;font-weight:400;color:#000;white-space:pre;letter-spacing:-0.110px;">Related links:</div>
<div id="m1b" style="position:absolute;left:158.5px;top:546.89px;line-height:20px;font-size:11px;font-weight:400;color:#3a7ad8;white-space:pre;letter-spacing:-0.267px;text-decoration:underline">View on GitHub</div>
<div id="m2" style="position:absolute;left:91.5px;top:559.59px;line-height:20px;font-size:11px;font-weight:400;color:#000;white-space:pre;letter-spacing:-0.097px;">Contained in branches:</div>
<div id="m2b" style="position:absolute;left:205.5px;top:559.59px;line-height:20px;font-size:11px;font-weight:400;color:#3a7ad8;white-space:pre;letter-spacing:-0.043px;text-decoration:underline">3991_idea</div>
<div id="m3" style="position:absolute;left:91.5px;top:572.29px;line-height:20px;font-size:11px;font-weight:400;color:#000;white-space:pre;letter-spacing:-0.022px;">Contained in no tag</div>
</body></html>
